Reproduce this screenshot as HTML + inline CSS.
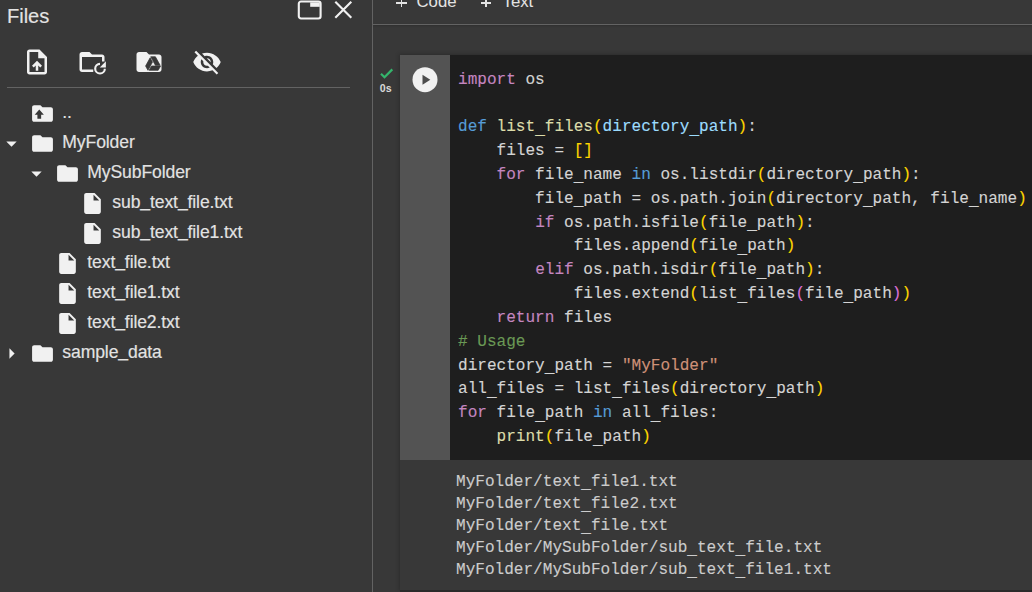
<!DOCTYPE html>
<html><head><meta charset="utf-8">
<style>
html,body{margin:0;padding:0;width:1032px;height:592px;overflow:hidden;background:#383838;}
body{position:relative;font-family:"Liberation Sans",sans-serif;color:#e3e3e3;}
.a{position:absolute;}
#side{left:0;top:0;width:372px;height:592px;background:#383838;}
#vdiv{left:372px;top:0;width:1px;height:592px;background:#636363;}
#nb{left:373px;top:0;width:659px;height:592px;background:#383838;}
.title{left:6.9px;top:0.2px;font-size:20.1px;line-height:32px;-webkit-text-stroke:0.15px currentColor;}
.sep{left:7px;top:87px;width:343px;height:1px;background:#636363;}
.row{font-size:17.6px;letter-spacing:-0.12px;-webkit-text-stroke:0.15px currentColor;line-height:30px;white-space:nowrap;height:30px;}
.ic{position:absolute;}
.mono{font-family:"Liberation Mono",monospace;font-size:16.07px;white-space:pre;-webkit-text-stroke:0.12px currentColor;}
#code{left:458px;top:68.5px;line-height:23.84px;color:#d4d4d4;}
#out{left:456px;top:470.5px;line-height:22px;color:#cccccc;}
u{text-decoration:none;position:relative;}.mono u{top:2.5px}.row u{top:-1.8px}
.kw{color:#c586c0}.df{color:#569cd6}.fn{color:#dcdcaa}.pm{color:#9cdcfe}
.b1{color:#ffd700}.b2{color:#da70d6}.st{color:#ce9178}.cm{color:#6a9955}
</style></head><body>
<div id="side" class="a">
  <div class="a title">Files</div>
  <!-- window icon -->
  <svg class="ic" style="left:296px;top:-1px" width="27" height="22" viewBox="0 0 27 22">
    <rect x="2.8" y="2.5" width="21.8" height="17" rx="2.2" fill="none" stroke="#f1f1f1" stroke-width="2.1"/>
    <rect x="14.2" y="3.4" width="9.6" height="4.4" fill="#f1f1f1"/>
  </svg>
  <!-- close X -->
  <svg class="ic" style="left:332px;top:-1px" width="22" height="22" viewBox="0 0 22 22">
    <path d="M3.3 2.8L19.3 18.8M19.3 2.8L3.3 18.8" stroke="#f1f1f1" stroke-width="2.1"/>
  </svg>
  <!-- upload file -->
  <svg class="ic" style="left:22px;top:46.5px" width="30" height="30" viewBox="0 0 24 24">
    <path fill="#f1f1f1" d="M14 2H6c-1.1 0-2 .9-2 2v16c0 1.1.9 2 2 2h12c1.1 0 2-.9 2-2V8l-6-6zm4 18H6V4h7v5h5v11z"/>
    <path fill="#f1f1f1" d="M13.5 3.5v5h5z"/>
    <path fill="#f1f1f1" d="M8 15.01l1.41 1.41L11 14.84V19h2v-4.16l1.59 1.59L16 15.01 12.01 11 8 15.01z"/>
  </svg>
  <!-- folder refresh -->
  <svg class="ic" style="left:76.5px;top:46.5px" width="30" height="30" viewBox="0 0 24 24">
    <path fill="#f1f1f1" d="M4 20c-1.1 0-2-.9-2-2V6c0-1.1.9-2 2-2h6l2 2h8c1.1 0 2 .9 2 2v3.5h-2V8H4v10h9v2H4z"/>
    <path fill="none" stroke="#f1f1f1" stroke-width="1.7" d="M22.25 17.3A3.85 3.85 0 1 1 18.4 13.45"/>
    <path fill="#f1f1f1" d="M23.1 11.4v4.9h-4.9z"/>
  </svg>
  <!-- drive folder -->
  <svg class="ic" style="left:133.7px;top:46.7px" width="30" height="30" viewBox="0 0 24 24">
    <path fill="#f1f1f1" d="M10 4H4c-1.1 0-2 .9-2 2v12c0 1.1.9 2 2 2h16c1.1 0 2-.9 2-2V8c0-1.1-.9-2-2-2h-8l-2-2z"/>
    <path fill="#383838" stroke="#383838" stroke-width="1.1" stroke-linejoin="round" transform="translate(8.65 6.7) scale(0.55 0.568)" d="M7.71 3.5L1.15 15L4.58 21L11.13 9.5zM9.73 15L6.3 21H19.42L22.85 15zM22.28 14L15.42 2H8.58L15.43 14z"/>
  </svg>
  <!-- eye off -->
  <svg class="ic" style="left:191.5px;top:47px" width="30" height="30" viewBox="0 0 24 24">
    <path fill="#f1f1f1" d="M12 7c2.76 0 5 2.24 5 5 0 .65-.13 1.26-.36 1.83l2.92 2.92c1.51-1.26 2.7-2.89 3.43-4.75-1.73-4.39-6-7.5-11-7.5-1.4 0-2.74.25-3.98.7l2.16 2.16C10.74 7.13 11.35 7 12 7zM2 4.27l2.28 2.28.46.46C3.08 8.3 1.78 10.02 1 12c1.73 4.39 6 7.5 11 7.5 1.55 0 3.03-.3 4.38-.84l.42.42L19.73 22 21 20.73 3.27 3 2 4.27zM7.53 9.8l1.55 1.55c-.05.21-.08.43-.08.65 0 1.66 1.34 3 3 3 .22 0 .44-.03.65-.08l1.55 1.55c-.67.33-1.41.53-2.2.53-2.76 0-5-2.24-5-5 0-.79.2-1.53.53-2.2zm4.31-.78l3.15 3.15.02-.16c0-1.66-1.34-3-3-3l-.17.01z"/>
  </svg>
  <div class="a sep"></div>
  <svg class="ic" style="left:30.0px;top:100.9px" width="25" height="25" viewBox="0 0 24 24"><path fill="#f1f1f1" d="M10 4H4c-1.1 0-2 .9-2 2v12c0 1.1.9 2 2 2h16c1.1 0 2-.9 2-2V8c0-1.1-.9-2-2-2h-8l-2-2z"/><path fill="#383838" d="M8.9 8.2l-4.4 4.9h2.6v4h3.6v-4h2.6z"/></svg>
  <div class="a row" style="left:62.3px;top:96.80px">..</div>
  <svg class="ic" style="left:-1.1px;top:130.6px" width="25" height="25" viewBox="0 0 24 24"><path fill="#f1f1f1" d="M7 10l5 5 5-5z"/></svg>
  <svg class="ic" style="left:30.0px;top:130.9px" width="25" height="25" viewBox="0 0 24 24"><path fill="#f1f1f1" d="M10 4H4c-1.1 0-2 .9-2 2v12c0 1.1.9 2 2 2h16c1.1 0 2-.9 2-2V8c0-1.1-.9-2-2-2h-8l-2-2z"/></svg>
  <div class="a row" style="left:62.3px;top:126.80px">MyFolder</div>
  <svg class="ic" style="left:23.9px;top:160.6px" width="25" height="25" viewBox="0 0 24 24"><path fill="#f1f1f1" d="M7 10l5 5 5-5z"/></svg>
  <svg class="ic" style="left:55.0px;top:160.9px" width="25" height="25" viewBox="0 0 24 24"><path fill="#f1f1f1" d="M10 4H4c-1.1 0-2 .9-2 2v12c0 1.1.9 2 2 2h16c1.1 0 2-.9 2-2V8c0-1.1-.9-2-2-2h-8l-2-2z"/></svg>
  <div class="a row" style="left:87.3px;top:156.80px">MySubFolder</div>
  <svg class="ic" style="left:80.0px;top:190.9px" width="25" height="25" viewBox="0 0 24 24"><path fill="#f1f1f1" d="M6 2c-1.1 0-2 .9-2 2v16c0 1.1.9 2 2 2h12c1.1 0 2-.9 2-2V8l-6-6H6zm7 7V3.5L18.5 9H13z"/></svg>
  <div class="a row" style="left:112.3px;top:186.80px">sub<u>_</u>text<u>_</u>file.txt</div>
  <svg class="ic" style="left:80.0px;top:220.9px" width="25" height="25" viewBox="0 0 24 24"><path fill="#f1f1f1" d="M6 2c-1.1 0-2 .9-2 2v16c0 1.1.9 2 2 2h12c1.1 0 2-.9 2-2V8l-6-6H6zm7 7V3.5L18.5 9H13z"/></svg>
  <div class="a row" style="left:112.3px;top:216.80px">sub<u>_</u>text<u>_</u>file1.txt</div>
  <svg class="ic" style="left:55.0px;top:250.9px" width="25" height="25" viewBox="0 0 24 24"><path fill="#f1f1f1" d="M6 2c-1.1 0-2 .9-2 2v16c0 1.1.9 2 2 2h12c1.1 0 2-.9 2-2V8l-6-6H6zm7 7V3.5L18.5 9H13z"/></svg>
  <div class="a row" style="left:87.3px;top:246.80px">text<u>_</u>file.txt</div>
  <svg class="ic" style="left:55.0px;top:280.9px" width="25" height="25" viewBox="0 0 24 24"><path fill="#f1f1f1" d="M6 2c-1.1 0-2 .9-2 2v16c0 1.1.9 2 2 2h12c1.1 0 2-.9 2-2V8l-6-6H6zm7 7V3.5L18.5 9H13z"/></svg>
  <div class="a row" style="left:87.3px;top:276.80px">text<u>_</u>file1.txt</div>
  <svg class="ic" style="left:55.0px;top:310.9px" width="25" height="25" viewBox="0 0 24 24"><path fill="#f1f1f1" d="M6 2c-1.1 0-2 .9-2 2v16c0 1.1.9 2 2 2h12c1.1 0 2-.9 2-2V8l-6-6H6zm7 7V3.5L18.5 9H13z"/></svg>
  <div class="a row" style="left:87.3px;top:306.80px">text<u>_</u>file2.txt</div>
  <svg class="ic" style="left:-1.1px;top:340.6px" width="25" height="25" viewBox="0 0 24 24"><path fill="#f1f1f1" d="M10 7l5 5-5 5z"/></svg>
  <svg class="ic" style="left:30.0px;top:340.9px" width="25" height="25" viewBox="0 0 24 24"><path fill="#f1f1f1" d="M10 4H4c-1.1 0-2 .9-2 2v12c0 1.1.9 2 2 2h16c1.1 0 2-.9 2-2V8c0-1.1-.9-2-2-2h-8l-2-2z"/></svg>
  <div class="a row" style="left:62.3px;top:336.80px">sample<u>_</u>data</div>
</div>
<div id="vdiv" class="a"></div>
<div id="nb" class="a"></div>
<!-- toolbar -->
<div class="a" style="left:396px;top:2.2px;width:10.6px;height:1.6px;background:#e3e3e3"></div>
<div class="a" style="left:400.5px;top:-3.5px;width:1.6px;height:10.7px;background:#e3e3e3"></div>
<div class="a" style="left:416.5px;top:-8.2px;font-size:16.8px;line-height:20px;color:#e3e3e3">Code</div>
<div class="a" style="left:480.5px;top:2.2px;width:10.6px;height:1.6px;background:#e3e3e3"></div>
<div class="a" style="left:485px;top:-3.5px;width:1.6px;height:10.7px;background:#e3e3e3"></div>
<div class="a" style="left:502.5px;top:-8.2px;font-size:16.8px;line-height:20px;color:#e3e3e3">Text</div>
<!-- toolbar line -->
<div class="a" style="left:373px;top:24px;width:659px;height:1px;background:#636363;box-shadow:0 1px 2px rgba(0,0,0,0.25)"></div>
<div class="a" style="left:400px;top:55px;width:640px;height:535px;box-shadow:0 0 4px 1px rgba(0,0,0,0.22)"></div>
<!-- cell gutter -->
<div class="a" style="left:400px;top:55px;width:50px;height:405px;background:#535353"></div>
<!-- code bg -->
<div class="a" style="left:450px;top:55px;width:582px;height:405px;background:#1e1e1e"></div>
<!-- output bg -->
<div class="a" style="left:400px;top:460px;width:632px;height:130px;background:#383838"></div>
<div class="a" style="left:400px;top:590px;width:632px;height:2px;background:#2a2a2a"></div>

<!-- run status -->
<svg class="a" style="left:378px;top:64px" width="18" height="18" viewBox="0 0 18 18">
  <path d="M3 9.7l3.5 3.5 7.8-7.8" fill="none" stroke="#34b56c" stroke-width="2.2"/>
</svg>
<div class="a" style="left:379.8px;top:81px;font-size:10.6px;line-height:14px;font-weight:bold;color:#dadada">0s</div>
<!-- play button -->
<svg class="a" style="left:412px;top:67px" width="26" height="26" viewBox="0 0 26 26">
  <circle cx="13" cy="12.7" r="12.5" fill="#f1f1f1"/>
  <path d="M10.5 7.8v10l7.8-5z" fill="#4c4c4c"/>
</svg>
<div id="code" class="a mono"><span class="kw">import</span> os

<span class="df">def</span> <span class="fn">list<u>_</u>files</span><span class="b1">(</span><span class="pm">directory<u>_</u>path</span><span class="b1">)</span>:
    files = <span class="b1">[]</span>
    <span class="kw">for</span> file<u>_</u>name <span class="df">in</span> os.listdir<span class="b1">(</span>directory<u>_</u>path<span class="b1">)</span>:
        file<u>_</u>path = os.path.join<span class="b1">(</span>directory<u>_</u>path, file<u>_</u>name<span class="b1">)</span>
        <span class="kw">if</span> os.path.isfile<span class="b1">(</span>file<u>_</u>path<span class="b1">)</span>:
            files.append<span class="b1">(</span>file<u>_</u>path<span class="b1">)</span>
        <span class="kw">elif</span> os.path.isdir<span class="b1">(</span>file<u>_</u>path<span class="b1">)</span>:
            files.extend<span class="b1">(</span>list<u>_</u>files<span class="b2">(</span>file<u>_</u>path<span class="b2">)</span><span class="b1">)</span>
    <span class="kw">return</span> files
<span class="cm"># Usage</span>
directory<u>_</u>path = <span class="st">"MyFolder"</span>
all<u>_</u>files = list<u>_</u>files<span class="b1">(</span>directory<u>_</u>path<span class="b1">)</span>
<span class="kw">for</span> file<u>_</u>path <span class="df">in</span> all<u>_</u>files:
    <span class="fn">print</span><span class="b1">(</span>file<u>_</u>path<span class="b1">)</span></div>

<div id="out" class="a mono">MyFolder/text<u>_</u>file1.txt
MyFolder/text<u>_</u>file2.txt
MyFolder/text<u>_</u>file.txt
MyFolder/MySubFolder/sub<u>_</u>text<u>_</u>file.txt
MyFolder/MySubFolder/sub<u>_</u>text<u>_</u>file1.txt</div>
</body></html>
